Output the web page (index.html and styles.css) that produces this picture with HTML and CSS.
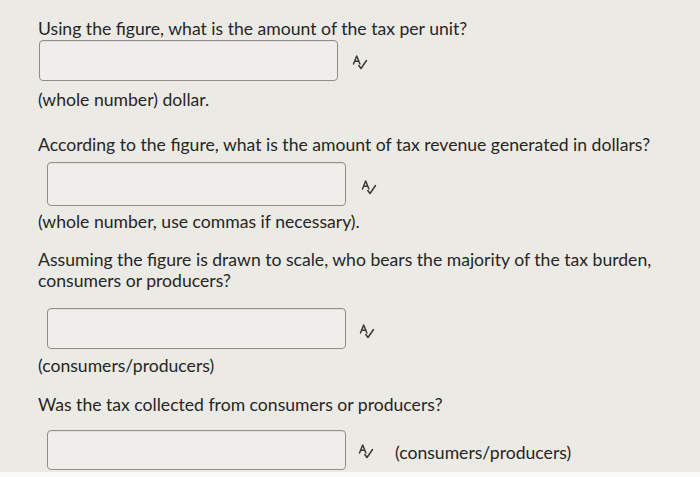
FILE: index.html
```html
<!DOCTYPE html>
<html lang="en">
<head>
<meta charset="utf-8">
<title>Tax questions</title>
<link rel="stylesheet" href="styles.css">
</head>
<body>
<main class="page">
  <p class="q q1">Using the figure, what is the amount of the tax per unit?</p>
  <div class="answer a1">
    <span class="box"></span>
    <svg class="icon" viewBox="0 0 16 15" aria-hidden="true"><path d="M1.5 9 L4.7 1 L7.9 9 M2.7 6.2 H6.7" /><path d="M6.8 10.5 L9 13.5 L14.5 5.5" /></svg>
  </div>
  <p class="note n1">(whole number) dollar.</p>

  <p class="q q2">According to the figure, what is the amount of tax revenue generated in dollars?</p>
  <div class="answer a2">
    <span class="box"></span>
    <svg class="icon" viewBox="0 0 16 15" aria-hidden="true"><path d="M1.5 9 L4.7 1 L7.9 9 M2.7 6.2 H6.7" /><path d="M6.8 10.5 L9 13.5 L14.5 5.5" /></svg>
  </div>
  <p class="note n2">(whole number, use commas if necessary).</p>

  <p class="q q3">Assuming the figure is drawn to scale, who bears the majority of the tax burden, consumers or producers?</p>
  <div class="answer a3">
    <span class="box"></span>
    <svg class="icon" viewBox="0 0 16 15" aria-hidden="true"><path d="M1.5 9 L4.7 1 L7.9 9 M2.7 6.2 H6.7" /><path d="M6.8 10.5 L9 13.5 L14.5 5.5" /></svg>
  </div>
  <p class="note n3">(consumers/producers)</p>

  <p class="q q4">Was the tax collected from consumers or producers?</p>
  <div class="answer a4">
    <span class="box"></span>
    <svg class="icon" viewBox="0 0 16 15" aria-hidden="true"><path d="M1.5 9 L4.7 1 L7.9 9 M2.7 6.2 H6.7" /><path d="M6.8 10.5 L9 13.5 L14.5 5.5" /></svg>
    <span class="hint">(consumers/producers)</span>
  </div>
</main>
<div class="strip"></div>
</body>
</html>
```

FILE: styles.css
```css
html, body {
  margin: 0;
  padding: 0;
}
body {
  background: #eceae5;
  font-family: Lato, "Open Sans", sans-serif;
  font-size: 17.6px;
  line-height: 21px;
  color: #262626;
  width: 700px;
  height: 477px;
  overflow: hidden;
  display: flex;
  flex-direction: column;
}
.page {
  padding: 18px 0 0 38px;
  height: 472px;
  box-sizing: border-box;
  flex: none;
}
p {
  margin: 0;
}
.q3 {
  width: 630px;
}
.answer {
  display: flex;
  align-items: center;
}
.box {
  display: block;
  flex: none;
  width: 297px;
  height: 39px;
  border: 1px solid #8f8e8b;
  border-radius: 4px;
  background: #efeeea;
  box-shadow: inset 0 1px 1px rgba(0,0,0,0.06);
}
.icon {
  flex: none;
  width: 16px;
  height: 15px;
  fill: none;
  stroke: #3a3a3a;
  stroke-width: 1.5;
  stroke-linecap: round;
  stroke-linejoin: round;
}
.a1 { margin: 1px 0 0 1px; }
.a1 .icon { margin-left: 14px; margin-top: 4px; }
.n1 { margin-top: 8px; }

.q2 { margin-top: 24px; }
.a2 { margin: 7px 0 0 9px; }
.a2 .box { height: 42px; }
.a2 .icon { margin-left: 15px; margin-top: 6px; }
.n2 { margin-top: 5px; }

.q3 { margin-top: 17px; }
.a3 { margin: 17px 0 0 9px; }
.a3 .icon { margin-left: 13px; margin-top: 6px; }
.n3 { margin-top: 6px; }

.q4 { margin-top: 18px; }
.a4 { margin: 15px 0 0 9px; }
.a4 .box { height: 38px; }
.a4 .icon { margin-left: 12px; margin-top: 3px; }
.hint { margin-left: 21px; margin-top: 4px; }

.strip {
  flex: 1;
  background: #fbfbfa;
}
```
